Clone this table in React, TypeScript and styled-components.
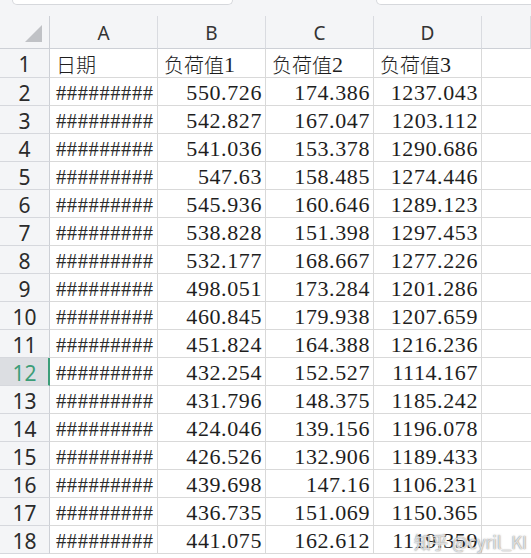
import React from "react";
import styled, { createGlobalStyle } from "styled-components";

const Global = createGlobalStyle`
  html, body { margin: 0; padding: 0; background: #ffffff; }
  body { width: 531px; height: 558px; overflow: hidden; }
`;

const Page = styled.div`
  position: relative;
  width: 531px;
  height: 558px;
  overflow: hidden;
  background: #ffffff;
`;

const TopStrip = styled.div`
  height: 16px;
  background: #f4f5f7;
  display: flex;
  align-items: flex-start;
  padding-left: 12px;
  gap: 143px;
`;

const InputBox = styled.div<{ $w: number }>`
  width: ${(p) => p.$w}px;
  height: 4px;
  background: #ffffff;
  border: 1px solid #d6d8dc;
  border-top: none;
  border-radius: 0 0 5px 5px;
  flex-shrink: 0;
`;

const Grid = styled.div`
  display: grid;
  grid-template-columns: 50px 108px 108px 108px 108px 1fr;
`;

const Corner = styled.div`
  height: 33px;
  box-sizing: border-box;
  background: #f4f5f7;
  border-right: 1px solid #cdd0d6;
  border-bottom: 1px solid #cdd0d6;
  position: relative;
`;

const CornerTriangle = styled.svg`
  position: absolute;
  left: 25px;
  top: 9px;
`;

const ColHead = styled.div`
  height: 33px;
  background: #f4f5f7;
  border-right: 1px solid #d9dbe0;
  border-bottom: 1px solid #cdd0d6;
  display: flex;
  align-items: center;
  justify-content: center;
  font-family: "Noto Sans", "Open Sans", sans-serif;
  font-size: 19px;
  color: #333333;
  padding-top: 2px;
  box-sizing: border-box;
`;

const RowHead = styled.div<{ $first?: boolean; $sel?: boolean }>`
  height: ${(p) => (p.$first ? 29 : 28)}px;
  box-sizing: border-box;
  background: ${(p) => (p.$sel ? "#dcdee2" : "#f4f5f7")};
  border-right: ${(p) => (p.$sel ? "2px solid #3c9d78" : "1px solid #cdd0d6")};
  border-bottom: 1px solid #d6d8dd;
  display: flex;
  align-items: center;
  justify-content: center;
  font-family: "Noto Sans", "Open Sans", sans-serif;
  font-size: 21px;
  color: ${(p) => (p.$sel ? "#3c9d78" : "#2b2b2b")};
  padding-top: 2px;
  padding-left: ${(p) => (p.$sel ? 1 : 0)}px;
`;

const Cell = styled.div<{ $first?: boolean; $num?: boolean; $last?: boolean }>`
  height: ${(p) => (p.$first ? 29 : 28)}px;
  box-sizing: border-box;
  border-right: ${(p) => (p.$last ? "none" : "1px solid #d9d9d9")};
  border-bottom: 1px solid #d9d9d9;
  display: flex;
  align-items: center;
  justify-content: ${(p) => (p.$num ? "flex-end" : "flex-start")};
  padding: 3px ${(p) => (p.$num ? 3 : 0)}px 0 ${(p) => (p.$num ? 0 : 6)}px;
  font-family: "Liberation Serif", "Noto Sans CJK SC", serif;
  font-size: 22px;
  letter-spacing: ${(p) => (p.$num ? "0.6px" : "0")};
  color: #1e1e1e;
  white-space: nowrap;
  overflow: hidden;
`;

const Hashes = styled.span`
  font-size: 20.5px;
  letter-spacing: 0.6px;
  color: #2a2a2a;
`;

const CjkText = styled.span`
  font-family: "Noto Sans CJK SC", sans-serif;
  font-size: 20px;
  font-weight: 300;
`;

const Watermark = styled.div`
  position: absolute;
  left: 414px;
  top: 529px;
  font-family: "Noto Sans CJK SC", "Noto Sans", sans-serif;
  font-size: 17px;
  color: rgba(255, 255, 255, 0.72);
  text-shadow: 0 0 1px rgba(90, 90, 90, 0.7), 0 0 2px rgba(120, 120, 120, 0.5);
  white-space: nowrap;
`;

const data: [string, string, string][] = [
  ["550.726", "174.386", "1237.043"],
  ["542.827", "167.047", "1203.112"],
  ["541.036", "153.378", "1290.686"],
  ["547.63", "158.485", "1274.446"],
  ["545.936", "160.646", "1289.123"],
  ["538.828", "151.398", "1297.453"],
  ["532.177", "168.667", "1277.226"],
  ["498.051", "173.284", "1201.286"],
  ["460.845", "179.938", "1207.659"],
  ["451.824", "164.388", "1216.236"],
  ["432.254", "152.527", "1114.167"],
  ["431.796", "148.375", "1185.242"],
  ["424.046", "139.156", "1196.078"],
  ["426.526", "132.906", "1189.433"],
  ["439.698", "147.16", "1106.231"],
  ["436.735", "151.069", "1150.365"],
  ["441.075", "162.612", "1119.359"],
];

function Header({ text }: { text: string }) {
  const m = text.match(/^(\D*)(\d*)$/);
  const cjk = m ? m[1] : text;
  const num = m ? m[2] : "";
  return (
    <>
      <CjkText>{cjk}</CjkText>
      {num}
    </>
  );
}

export default function App() {
  return (
    <Page>
      <Global />
      <TopStrip>
        <InputBox $w={219} />
        <InputBox $w={170} />
      </TopStrip>
      <Grid>
        <Corner>
          <CornerTriangle width="17" height="17" viewBox="0 0 17 17">
            <polygon points="17,0 17,17 0,17" fill="#c0c2c6" />
          </CornerTriangle>
        </Corner>
        {["A", "B", "C", "D"].map((c) => (
          <ColHead key={c}>{c}</ColHead>
        ))}
        <ColHead />

        <RowHead $first>1</RowHead>
        <Cell $first>
          <Header text="日期" />
        </Cell>
        <Cell $first>
          <Header text="负荷值1" />
        </Cell>
        <Cell $first>
          <Header text="负荷值2" />
        </Cell>
        <Cell $first>
          <Header text="负荷值3" />
        </Cell>
        <Cell $first $last />

        {data.map((row, i) => {
          const n = i + 2;
          return (
            <React.Fragment key={n}>
              <RowHead $sel={n === 12}>{n}</RowHead>
              <Cell>
                <Hashes>#########</Hashes>
              </Cell>
              <Cell $num>{row[0]}</Cell>
              <Cell $num>{row[1]}</Cell>
              <Cell $num>{row[2]}</Cell>
              <Cell $last />
            </React.Fragment>
          );
        })}
      </Grid>
      <Watermark>知乎 @cyril_KI</Watermark>
    </Page>
  );
}
